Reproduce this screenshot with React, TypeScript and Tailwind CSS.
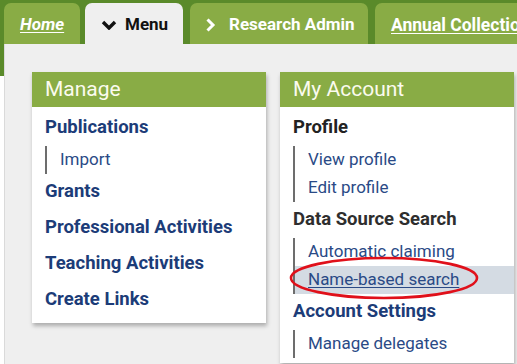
import React from "react";

type Item = { label: string; tone?: "link" | "dark" | "mid"; subs?: string[] };

const manageItems: Item[] = [
  { label: "Publications", subs: ["Import"] },
  { label: "Grants" },
  { label: "Professional Activities" },
  { label: "Teaching Activities" },
  { label: "Create Links" },
];

const accountItems: Item[] = [
  { label: "Profile", tone: "dark", subs: ["View profile", "Edit profile"] },
  { label: "Data Source Search", tone: "mid", subs: ["Automatic claiming", "Name-based search"] },
  { label: "Account Settings", subs: ["Manage delegates"] },
];

const headingTone = {
  link: "text-[#1c3c78]",
  dark: "text-[#222222]",
  mid: "text-[#2e2e2e]",
};

const ChevronDown = () => (
  <svg width="16" height="10" viewBox="0 0 16 10" className="shrink-0">
    <polyline points="2,2 8,8 14,2" fill="none" stroke="#111" strokeWidth="3.4" />
  </svg>
);

const ChevronRight = () => (
  <svg width="11" height="14" viewBox="0 0 11 14" className="shrink-0">
    <polyline points="2.5,1.5 8,7 2.5,12.5" fill="none" stroke="#fff" strokeWidth="3" />
  </svg>
);

const Card = ({ title, items }: { title: string; items: Item[] }) => (
  <section className="w-[234px] shrink-0 self-start bg-white shadow-[1px_3px_4px_rgba(0,0,0,0.28)]">
    <h2 className="flex h-[35px] items-center bg-[#89ac45] px-[13px] text-[21px] leading-none text-[#fbfbef]">
      {title}
    </h2>
    <ul className="px-[13px] pt-[3px] pb-[5px]">
      {items.map((item) => (
        <li key={item.label}>
          <div
            className={`flex h-[36px] items-center whitespace-nowrap text-[18.5px] font-bold ${headingTone[item.tone ?? "link"]}`}
          >
            {item.label}
          </div>
          {item.subs && (
            <ul className="border-l-2 border-[#6d6d6d]">
              {item.subs.map((s) => {
                const active = s === "Name-based search";
                return (
                  <li
                    key={s}
                    className={`-mr-[13px] flex h-[28px] items-center whitespace-nowrap pl-[13px] text-[17px] text-[#2a4a86] ${
                      active ? "bg-[#d4dbe3] underline underline-offset-2" : ""
                    }`}
                  >
                    {s}
                  </li>
                );
              })}
            </ul>
          )}
        </li>
      ))}
    </ul>
  </section>
);

export default function App() {
  return (
    <div className="relative h-[364px] w-[517px] overflow-hidden bg-white font-['Roboto',sans-serif]">
      <nav className="flex h-[44px] items-end overflow-hidden bg-[#5a8a2a] pl-1 text-[17px] font-bold text-white">
        <a className="flex h-[41px] w-[76px] shrink-0 items-center rounded-t-[7px] bg-[#89ac45] pt-[3px] pl-4 italic underline underline-offset-2">
          Home
        </a>
        <a className="ml-[5px] flex h-[41px] w-[98px] shrink-0 items-center gap-2 rounded-t-[7px] bg-[#efefef] pt-[3px] pl-4 text-[#111]">
          <ChevronDown />
          Menu
        </a>
        <a className="ml-[7px] flex h-[41px] w-[178px] shrink-0 items-center gap-[13px] rounded-t-[7px] bg-[#89ac45] pt-[3px] pl-[15px]">
          <ChevronRight />
          Research Admin
        </a>
        <a className="ml-[7px] flex h-[41px] w-[170px] shrink-0 items-center whitespace-nowrap rounded-t-[7px] bg-[#89ac45] pt-[3px] pl-4 text-[17.5px] underline underline-offset-2">
          Annual Collection
        </a>
      </nav>
      <div className="flex h-[320px]">
        <div className="w-1 shrink-0">
          <div className="h-[32px] bg-[#5a8a2a]" />
        </div>
        <main className="flex flex-1 gap-[14px] border-l border-[#dadada] bg-[#efefef] pt-[28px] pl-[27px]">
          <Card title="Manage" items={manageItems} />
          <Card title="My Account" items={accountItems} />
        </main>
      </div>
      <svg className="pointer-events-none absolute left-[289px] top-[256px]" width="192" height="44" viewBox="0 0 192 44">
        <ellipse cx="95" cy="22" rx="93" ry="20" fill="none" stroke="#e0101a" strokeWidth="2.6" />
      </svg>
    </div>
  );
}
